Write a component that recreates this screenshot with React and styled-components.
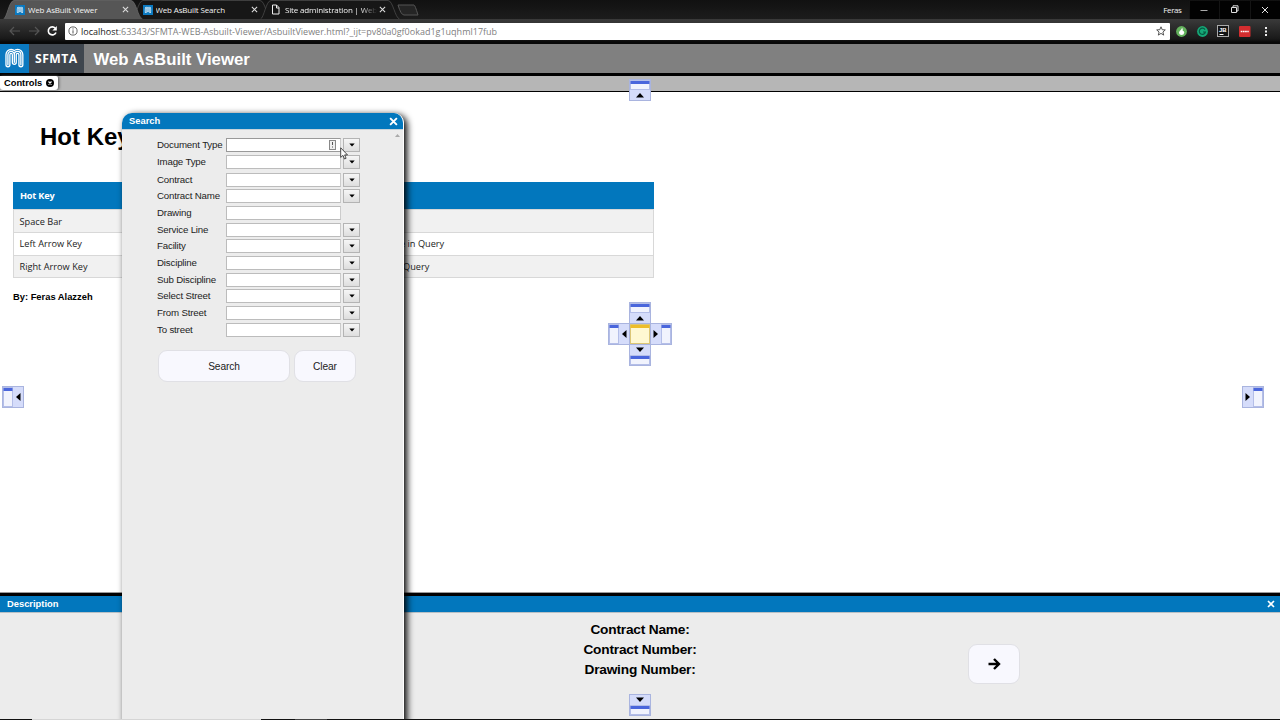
import React from 'react';
import styled, { createGlobalStyle } from 'styled-components';

const GlobalStyle = createGlobalStyle`
    * {
        box-sizing: border-box;
    }
    body {
        margin: 0;
        overflow: hidden;
        font-family: "Liberation Sans", Arial, sans-serif;
    }
`;

const Page = styled.div`
    position: relative;
    display: flex;
    flex-direction: column;
    width: 1280px;
    height: 720px;
    overflow: hidden;
    background: #fff;
`;

/* browser window */

const TabStrip = styled.div`
    display: flex;
    flex: none;
    height: 19px;
    padding-left: 3px;
    background: linear-gradient(#111, #1c1c1c);
    font-family: "Open Sans", sans-serif;
    color: #f2f2f2;
`;

const TabBox = styled.div`
    position: relative;
    display: flex;
    align-items: center;
    width: 138px;
    height: 19px;
    margin-right: -9.5px;
    padding: 0 12px 0 ${props => (props.$active ? 12 : 11)}px;
    z-index: ${props => (props.$active ? 2 : 1)};
`;

const TabShape = styled.svg`
    position: absolute;
    left: 0;
    top: 0;
    z-index: -1;
`;

const TabTitle = styled.span`
    flex: 1;
    margin-left: ${props => (props.$fade ? 5 : 3)}px;
    overflow: hidden;
    white-space: nowrap;
    font-size: 8px;
    line-height: 12px;
    letter-spacing: -0.15px;
    ${props => props.$fade && 'mask-image: linear-gradient(90deg, #000 76px, transparent 92px);'}
`;

const NewTab = styled.svg`
    margin: 4px 0 0 8px;
`;

const WindowButtons = styled.div`
    display: flex;
    align-items: center;
    margin-left: auto;
    font-size: 8px;
    letter-spacing: -0.4px;
`;

const WindowButton = styled.div`
    display: flex;
    align-items: center;
    justify-content: center;
    width: 30.5px;
    height: 18px;
    border-left: 1px solid #141414;
    background: #020202;

    &:first-of-type {
        margin-left: 7px;
    }
`;

const Toolbar = styled.div`
    display: flex;
    align-items: center;
    flex: none;
    height: 25px;
    padding: 0 8px 1px 9px;
    background: linear-gradient(#3a3a3a, #191919 80%, #080808 92%);
`;

const NavIcons = styled.div`
    display: flex;
    gap: 6.5px;
    width: 56px;
`;

const UrlBar = styled.div`
    display: flex;
    align-items: center;
    width: 1105px;
    height: 17px;
    padding: 0 4px 0 3px;
    border-radius: 1px;
    background: #fff;
    font-family: "Open Sans", sans-serif;
    font-size: 9px;
    color: #808080;
`;

const Address = styled.span`
    flex: 1;
    margin-left: 3px;
    white-space: nowrap;

    b {
        font-weight: normal;
        color: #222;
    }
`;

const Extensions = styled.div`
    display: flex;
    align-items: center;
    justify-content: space-between;
    flex: 1;
    margin-left: 6px;
`;

/* application header */

const AppHeader = styled.header`
    display: flex;
    flex: none;
    height: 32px;
    border-bottom: 3px solid #000;
    background: #808080;
`;

const Brand = styled.div`
    display: flex;
    align-items: center;
    width: 84px;
    background: #3f464e;
    color: #fff;
    font: bold 12.2px "Open Sans", sans-serif;

    span {
        margin-left: 6px;
        letter-spacing: 0.45px;
    }
`;

const AppTitle = styled.h1`
    margin: 0 0 0 9.5px;
    color: #fff;
    font-size: 16.8px;
    line-height: 31px;
`;

const ControlsBar = styled.div`
    flex: none;
    height: 16px;
    border-bottom: 1px solid #000;
    background: #b6b6b6;
`;

const ControlsTab = styled.div`
    display: flex;
    align-items: center;
    justify-content: space-between;
    width: 58px;
    height: 14px;
    padding: 0 4px;
    border-radius: 0 2px 3px 3px;
    background: #fff;
    box-shadow: 1px 0 3px #555;
    font-size: 9.3px;
    font-weight: bold;
`;

/* hot key page */

const Main = styled.main`
    flex: 1;
    padding: 31px 13px 0;
`;

const Heading = styled.h2`
    margin: 0 0 31px 27px;
    font-size: 24px;
    line-height: 28px;
`;

const KeyTable = styled.div`
    width: 640.5px;
    border: 1px solid #d8d8d8;
    border-top: 0;
    font-family: "Open Sans", sans-serif;
    font-size: 9.2px;
    color: #222;
`;

const KeyHead = styled.div`
    display: flex;
    align-items: center;
    height: 27.4px;
    margin: 0 -1px;
    padding-left: 7px;
    background: #0277bd;
    color: #fff;
    font-weight: bold;
    letter-spacing: -0.2px;
`;

const KeyRow = styled.div`
    display: flex;
    align-items: center;
    height: 22.7px;
    padding-left: 5.5px;
    border-top: 1px solid #d8d8d8;
    background: ${props => (props.$shaded ? '#f1f1f1' : '#fff')};

    span:first-child {
        width: ${props => (props.$shaded ? 383.5 : 380.5)}px;
    }
`;

const Author = styled.p`
    margin: 14px 0 0;
    font-size: 9.35px;
    line-height: 11px;
    font-weight: bold;
`;

/* description panel */

const Description = styled.section`
    display: flex;
    flex-direction: column;
    flex: none;
    height: 126px;
    border-top: 3px solid #000;
    background: #ececec;
    box-shadow: 0 -1px 0 #999;
`;

const PanelBar = styled.div`
    display: flex;
    align-items: center;
    justify-content: space-between;
    height: 16px;
    padding: 0 5px 0 7px;
    background: #0277bd;
    color: #fff;
    font-size: 9.35px;
    font-weight: bold;
`;

const DescriptionBody = styled.div`
    position: relative;
    flex: 1;
    padding-top: 7px;
    border-top: 1px solid #b8c0c5;
    text-align: center;
    font-size: 13.7px;
    letter-spacing: -0.2px;
    line-height: 20px;
    font-weight: bold;
`;

const SoftButton = styled.button`
    display: flex;
    align-items: center;
    justify-content: center;
    width: ${props => props.$width}px;
    height: ${props => props.$height || 32}px;
    padding: 0;
    border: 1px solid #e0e0e5;
    border-radius: 9px;
    background: #f8f8fe;
    color: #222;
    font: 10.2px "Liberation Sans", Arial, sans-serif;
    letter-spacing: -0.1px;
`;

const NextSlot = styled.div`
    position: absolute;
    left: 968px;
    top: 31px;
`;

const Taskbar = styled.div`
    flex: none;
    height: 1px;
    background: linear-gradient(90deg, #111 32px, #d5d5d5 32px, #d5d5d5 261px, #111 261px, #111 295px, #444 295px, #444 327px, #111 327px);
`;

/* floating search dialog */

const Dialog = styled.div`
    position: absolute;
    left: 122px;
    top: 113px;
    width: 282px;
    height: 606px;
    border-right: 1px solid #fff;
    border-radius: 10px 10px 0 0;
    overflow: hidden;
    background: #ececec;
`;

const DialogShadow = styled.div`
    position: absolute;
    left: 122px;
    top: 113px;
    width: 282px;
    height: 626px;
    border-radius: 10px 10px 0 0;
    box-shadow: 3px 2px 7px #000;
    clip-path: inset(-8px -20px 20px -6px);
`;

const DialogBody = styled.div`
    position: relative;
    padding: 7px 0 0 35px;
    border-top: 1px solid #c5d2da;
`;

const Field = styled.div`
    display: flex;
    align-items: center;
    height: 16.67px;
    margin-bottom: ${props => (props.$gapAfter ? 1.2 : 0)}px;
`;

const Label = styled.label`
    width: 69px;
    font-size: 9.7px;
    letter-spacing: -0.17px;
    line-height: 12px;
    white-space: nowrap;
    color: #222;
`;

const Input = styled.div`
    display: flex;
    align-items: center;
    justify-content: flex-end;
    width: 115px;
    height: 14px;
    padding-right: 4px;
    border: 1px solid ${props => (props.$focus ? '#999' : '#bcbcbc')};
    border-right-color: #ccc;
    background: #fff;
`;

const DropButton = styled.div`
    display: flex;
    align-items: center;
    justify-content: center;
    width: 17px;
    height: 14px;
    margin-left: 2px;
    border: 1px solid #b4b4b4;
    background: linear-gradient(#f6f6f6, #dedede);
`;

const ButtonRow = styled.div`
    display: flex;
    gap: 4px;
    margin: 12px 0 0 1px;
`;

const ScrollCaret = styled.svg`
    position: absolute;
    right: 2px;
    top: 3px;
`;

const Pointer = styled.svg`
    position: absolute;
    left: 340px;
    top: 147px;
`;

const Dock = styled.svg`
    position: absolute;
    left: ${props => props.$x}px;
    top: ${props => props.$y}px;
`;

const fields = [
    'Document Type', 'Image Type', 'Contract', 'Contract Name', 'Drawing', 'Service Line',
    'Facility', 'Discipline', 'Sub Discipline', 'Select Street', 'From Street', 'To street',
];

function MuniLogo({ size }) {
    const worm = 'M8.2 21.5V11a3.3 3.3 0 0 1 6.6 0v8V11a3.3 3.3 0 0 1 6.8 0v10.5';
    return (
        <svg width={size} height={size} viewBox="0 0 30 30">
            <rect width="30" height="30" fill="#0b79c0" />
            <g fill="none" strokeLinecap="round" strokeLinejoin="round">
                <path d={worm} stroke="#fff" strokeWidth="5.4" />
                <path d={worm} stroke="#0b79c0" strokeWidth="2.7" />
                <path d={worm} stroke="#fff" strokeWidth="1.4" />
            </g>
        </svg>
    );
}

function Cross({ size = 7, color = '#fff', width = 1.2 }) {
    return (
        <svg width={size} height={size} viewBox="0 0 8 8">
            <path d="M1 1l6 6M7 1L1 7" stroke={color} strokeWidth={width} />
        </svg>
    );
}

function Tab({ title, active, page, fade }) {
    return (
        <TabBox $active={active}>
            <TabShape width="140" height="19">
                <path
                    d="M0.5 19C4 18 6 0.5 11 0.5H128C133 0.5 135 18 139.5 19"
                    fill={active ? '#565656' : '#171717'}
                    stroke={active ? '#6a6a6a' : '#4a4a4a'}
                    strokeWidth="0.8"
                />
            </TabShape>
            {page ? (
                <svg width="9" height="11" viewBox="0 0 9 11">
                    <path d="M1.5 1h4L8 3.5V10H1.5zM5.5 1v3H8" fill="none" stroke="#eee" />
                </svg>
            ) : <MuniLogo size={10} />}
            <TabTitle $fade={fade}>{title}</TabTitle>
            <Cross size={7} color="#ddd" />
        </TabBox>
    );
}

// side: where the docked window sits inside the 22px tile
function DockIcon({ x, y, side }) {
    const wins = { up: [1.5, 1.5, 19, 9], down: [1.5, 11.5, 19, 9], left: [1.5, 1.5, 9, 19], right: [11.5, 1.5, 9, 19] };
    const arrows = {
        up: 'M11 14l4 4.5H7z', down: 'M7 3.5h8l-4 4.5z',
        left: 'M18.5 7v8l-4.5-4z', right: 'M3.5 7v8l4.5-4z',
    };
    const [wx, wy, ww, wh] = wins[side];
    return (
        <Dock $x={x} $y={y} width="22" height="22">
            <rect x="0.5" y="0.5" width="21" height="21" fill="#d5dcfa" stroke="#a9b4df" />
            <rect x={wx} y={wy} width={ww} height={wh} fill="#f1f3fd" stroke="#b4bee8" />
            <rect x={wx} y={wy + 0.5} width={ww} height="3" fill="#4a66dc" />
            <path d={arrows[side]} fill="#000" />
        </Dock>
    );
}

function Browser() {
    return (
        <>
            <TabStrip>
                <Tab title="Web AsBuilt Viewer" active />
                <Tab title="Web AsBuilt Search" />
                <Tab title="Site administration | Web" page fade />
                <NewTab width="23" height="12">
                    <path d="M1 1h16q1 0 4 10H7Q4 11 1 1z" fill="#252525" stroke="#555" />
                </NewTab>
                <WindowButtons>
                    Feras
                    <WindowButton>
                        <svg width="8" height="8"><path d="M0.5 4.5h7" stroke="#aaa" /></svg>
                    </WindowButton>
                    <WindowButton>
                        <svg width="9" height="9">
                            <path d="M1.5 2.5h5v5h-5zM3 2V0.8h5V6H7" fill="none" stroke="#ddd" />
                        </svg>
                    </WindowButton>
                    <WindowButton><Cross size={8} width={0.9} /></WindowButton>
                </WindowButtons>
            </TabStrip>
            <Toolbar>
                <NavIcons>
                    <svg width="12" height="12"><path d="M11 6H1.5M5 2L1 6l4 4" fill="none" stroke="#555" strokeWidth="1.2" /></svg>
                    <svg width="12" height="12"><path d="M1 6h9.5M7 2l4 4-4 4" fill="none" stroke="#555" strokeWidth="1.2" /></svg>
                    <svg width="12" height="12">
                        <path d="M9.3 3.2A4 4 0 1 0 10 7.5" fill="none" stroke="#fff" strokeWidth="1.6" />
                        <path d="M10.8 1v4.4H6.4z" fill="#fff" />
                    </svg>
                </NavIcons>
                <UrlBar>
                    <svg width="10" height="10">
                        <circle cx="5" cy="5" r="4.1" fill="none" stroke="#555" strokeWidth="0.9" />
                        <path d="M5 4.3v3.2M5 2.4v1.1" stroke="#555" />
                    </svg>
                    <Address><b>localhost</b>:63343/SFMTA-WEB-Asbuilt-Viewer/AsbuiltViewer.html?_ijt=pv80a0gf0okad1g1uqhml17fub</Address>
                    <svg width="10" height="10" viewBox="0 0 10 10">
                        <path d="M5 .8l1.2 2.9 3.1.2L6.9 6l.8 3.1L5 7.4 2.3 9.1 3.1 6 .7 3.9l3.1-.2z" fill="none" stroke="#444" strokeWidth="0.9" />
                    </svg>
                </UrlBar>
                <Extensions>
                    <svg width="11" height="11">
                        <circle cx="5.5" cy="5.5" r="5.4" fill="#63b15c" />
                        <path d="M6 1.5C6 4 3 4.5 3 7q.5 2 2.5 2Q8 9 8.3 6.5 8 5 6.7 4.8 7 3 6 1.5z" fill="#fff" />
                    </svg>
                    <svg width="11" height="11">
                        <circle cx="5.5" cy="5.5" r="5.4" fill="#15a877" />
                        <path d="M8 3.6A3.1 3.1 0 1 0 8.4 6H6" fill="none" stroke="#075a42" strokeWidth="1.2" />
                    </svg>
                    <svg width="12" height="12">
                        <rect x="0.5" y="0.5" width="11" height="11" fill="#151515" stroke="#aaa" />
                        <text x="2" y="7" fontSize="6" fontWeight="bold" fontFamily="Liberation Sans" fill="#fff">JB</text>
                        <path d="M2.5 9.5h4" stroke="#fff" />
                    </svg>
                    <svg width="12" height="11">
                        <rect width="11.5" height="11" rx="1" fill="#d32d2f" />
                        <path d="M1.7 5.5h8" stroke="#fff" strokeWidth="1.6" strokeDasharray="1.7 0.5" />
                    </svg>
                    <svg width="12" height="11">
                        <path d="M5 1h2v2H5zM5 4.5h2v2H5zM5 8h2v2H5z" fill="#eee" />
                    </svg>
                </Extensions>
            </Toolbar>
        </>
    );
}

function SearchDialog() {
    return (
        <>
            <DialogShadow />
            <Dialog>
                <PanelBar>
                    Search
                    <Cross size={9} width={1.7} />
                </PanelBar>
                <DialogBody>
                    {fields.map((name, i) => (
                        <Field key={name} $gapAfter={i === 1}>
                            <Label>{name}</Label>
                            <Input $focus={i === 0}>
                                {i === 0 && (
                                    <svg width="7" height="10">
                                        <rect x="0.5" y="0.5" width="6" height="9" fill="#eee" stroke="#888" />
                                        <path d="M3.5 2v3M3.5 6.5v1" stroke="#555" />
                                    </svg>
                                )}
                            </Input>
                            {name !== 'Drawing' && (
                                <DropButton>
                                    <svg width="6" height="4"><path d="M0.3 0.5h5.4L3 3.5z" fill="#000" /></svg>
                                </DropButton>
                            )}
                        </Field>
                    ))}
                    <ButtonRow>
                        <SoftButton $width={132}>Search</SoftButton>
                        <SoftButton $width={62}>Clear</SoftButton>
                    </ButtonRow>
                    <ScrollCaret width="7" height="5"><path d="M1 4l2.5-3L6 4z" fill="#aaa" /></ScrollCaret>
                </DialogBody>
            </Dialog>
        </>
    );
}

function App() {
    return (
        <Page>
            <GlobalStyle />
            <Browser />
            <AppHeader>
                <Brand>
                    <MuniLogo size={29} />
                    <span>SFMTA</span>
                </Brand>
                <AppTitle>Web AsBuilt Viewer</AppTitle>
            </AppHeader>
            <ControlsBar>
                <ControlsTab>
                    Controls
                    <svg width="8" height="8">
                        <circle cx="4" cy="4" r="4" fill="#000" />
                        <path d="M2.5 2.5l3 3M5.5 2.5l-3 3" stroke="#fff" strokeWidth="1.2" />
                    </svg>
                </ControlsTab>
            </ControlsBar>
            <Main>
                <Heading>Hot Key</Heading>
                <KeyTable>
                    <KeyHead>Hot Key</KeyHead>
                    <KeyRow $shaded><span>Space Bar</span></KeyRow>
                    <KeyRow><span>Left Arrow Key</span><span>e in Query</span></KeyRow>
                    <KeyRow $shaded><span>Right Arrow Key</span><span>Query</span></KeyRow>
                </KeyTable>
                <Author>By: Feras Alazzeh</Author>
            </Main>
            <Description>
                <PanelBar>
                    Description
                    <Cross size={8} width={1.7} />
                </PanelBar>
                <DescriptionBody>
                    <div>Contract Name:</div>
                    <div>Contract Number:</div>
                    <div>Drawing Number:</div>
                    <NextSlot>
                        <SoftButton $width={52} $height={40}>
                            <svg width="13" height="12">
                                <path d="M0.5 6h10M6 1l5 5-5 5" fill="none" stroke="#000" strokeWidth="2.4" />
                            </svg>
                        </SoftButton>
                    </NextSlot>
                </DescriptionBody>
            </Description>
            <Taskbar />
            <SearchDialog />
            <DockIcon x={629} y={78.5} side="up" />
            <DockIcon x={629} y={302} side="up" />
            <DockIcon x={629} y={344} side="down" />
            <DockIcon x={608} y={323} side="left" />
            <DockIcon x={650} y={323} side="right" />
            <Dock $x={629} $y={323} width="22" height="22">
                <rect x="0.5" y="0.5" width="21" height="21" fill="#d5dcfa" stroke="#a9b4df" />
                <rect x="1.5" y="1.5" width="19" height="19" fill="#fff8d2" stroke="#dcc676" />
                <rect x="1.5" y="2" width="19" height="3" fill="#edbd2b" />
            </Dock>
            <DockIcon x={2} y={386} side="left" />
            <DockIcon x={1242} y={386} side="right" />
            <DockIcon x={629} y={694} side="down" />
            <Pointer width="8" height="13">
                <path d="M0.7 0.8v9.6L3 8.4l1.5 3.6 1.6-.7-1.5-3.4h2.9z" fill="#fff" stroke="#222" strokeWidth="0.8" />
            </Pointer>
        </Page>
    );
}

export default App;
